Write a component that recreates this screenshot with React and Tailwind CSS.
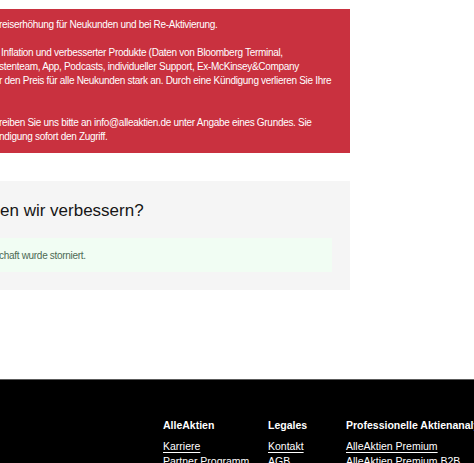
export default function App() {
  const footerCols = [
    { title: 'AlleAktien', links: ['Karriere', 'Partner Programm'], w: 'w-[105px]' },
    { title: 'Legales', links: ['Kontakt', 'AGB'], w: 'w-[78px]' },
    { title: 'Professionelle Aktienanalyse', links: ['AlleAktien Premium', 'AlleAktien Premium B2B'], w: 'w-[200px]' },
  ];

  return (
    <div className="h-screen overflow-hidden bg-white font-['Liberation_Sans',Arial,sans-serif]">
      <div className="w-[350px] pt-[9px]">
        {/* Price notice */}
        <div className="bg-[#c9313f] py-[9px] text-[10px] leading-[14px] tracking-[-0.3px] text-white">
          <p className="whitespace-nowrap -ml-[1px]">reiserhöhung für Neukunden und bei Re-Aktivierung.</p>
          <div className="mt-[14px] whitespace-nowrap">
            <p className="ml-[1px]"> Inflation und verbesserter Produkte (Daten von Bloomberg Terminal,</p>
            <p className="-ml-[1px]">stenteam, App, Podcasts, individueller Support, Ex-McKinsey&amp;Company</p>
            <p className="-ml-[1px]">r den Preis für alle Neukunden stark an. Durch eine Kündigung verlieren Sie Ihre</p>
            <p>&nbsp;</p>
          </div>
          <div className="mt-[14px] whitespace-nowrap">
            <p className="-ml-[1px]">reiben Sie uns bitte an info@alleaktien.de unter Angabe eines Grundes. Sie</p>
            <p className="-ml-[1px]">ndigung sofort den Zugriff.</p>
          </div>
        </div>

        {/* Feedback */}
        <div className="mt-[28px] bg-[#f5f5f5] pt-[18px] pb-[18px] pr-[18px]">
          <h2 className="whitespace-nowrap text-[17px] leading-[24px] text-[#161616]">en wir verbessern?</h2>
          <div className="mt-[15px] flex h-[34px] items-center bg-[#f1fdf3] text-[10px] tracking-[-0.3px] text-[#4d6a53]">
            <span className="-ml-[1px] whitespace-nowrap">chaft wurde storniert.</span>
          </div>
        </div>
      </div>

      {/* Footer */}
      <footer className="mt-[89px] h-[84px] overflow-hidden border-t border-[#5c5c5c] bg-black pt-[38px] pl-[163px]">
        <div className="flex">
          {footerCols.map((col) => (
            <div key={col.title} className={`${col.w} shrink-0`}>
              <div className="whitespace-nowrap text-[10.5px] font-bold leading-[14px] text-white">{col.title}</div>
              <ul className="mt-[7px]">
                {col.links.map((l) => (
                  <li key={l} className="whitespace-nowrap text-[10.5px] leading-[15px] text-white underline underline-offset-2">
                    {l}
                  </li>
                ))}
              </ul>
            </div>
          ))}
        </div>
      </footer>
    </div>
  );
}
